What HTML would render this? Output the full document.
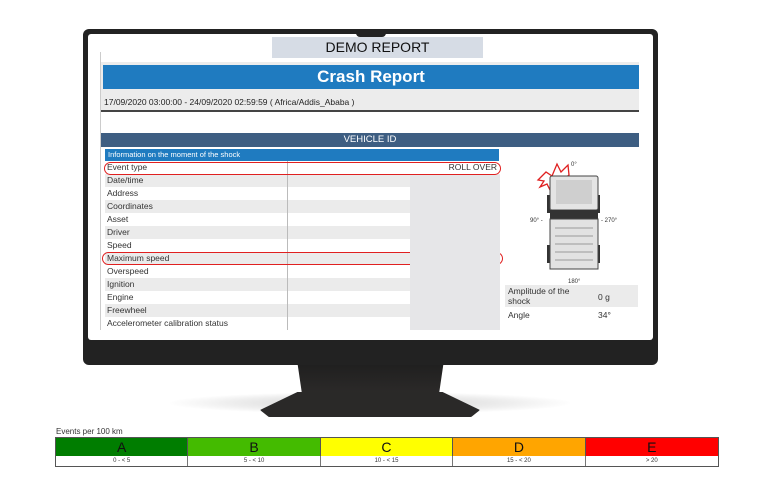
<!DOCTYPE html>
<html><head><meta charset="utf-8"><style>
*{margin:0;padding:0;box-sizing:border-box}
body{width:768px;height:485px;background:#fff;position:relative;overflow:hidden;font-family:"Liberation Sans",sans-serif}
.a{position:absolute}
.row{position:absolute;left:105px;width:395px;height:13px;font-size:8.5px;color:#333;line-height:13px;padding-left:2px}
.g{background:#ebebeb}
.seg{position:absolute;top:438px;height:18px;width:132.4px;border-right:1px solid #555;text-align:center;font-size:14px;line-height:18px;color:#111}
.rg{position:absolute;top:456px;height:10px;width:132.4px;border-right:1px solid #777;text-align:center;font-size:6px;line-height:10px;color:#333}
</style></head><body>
<!-- shadow -->
<div class="a" style="left:170px;top:392px;width:400px;height:22px;border-radius:50%;background:radial-gradient(ellipse,#cfcfcf 0%,#eee 50%,rgba(255,255,255,0) 72%)"></div>
<!-- stand -->
<div class="a" style="left:297px;top:360px;width:147px;height:40px;background:linear-gradient(#1e1e1e,#2e2c2b);clip-path:polygon(0 0,100% 0,96% 100%,4% 100%)"></div>
<div class="a" style="left:260px;top:392px;width:220px;height:25px;background:#2a2928;clip-path:polygon(17% 0,83% 0,100% 72%,96% 100%,4% 100%,0 72%);border-radius:0 0 10px 10px"></div>
<!-- monitor -->
<div class="a" style="left:83px;top:29px;width:575px;height:336px;background:#222;border-radius:6px"></div>
<div class="a" style="left:88px;top:34px;width:565px;height:306px;background:#fff;border-radius:3px"></div>
<div class="a" style="left:356px;top:30px;width:30px;height:7px;background:#222;border-radius:0 0 4px 4px"></div>
<div class="a" style="left:100px;top:52px;width:1px;height:278px;background:#ccc"></div>
<!-- report -->
<div class="a" style="left:272px;top:37px;width:211px;height:21px;background:#d6dce5;font-size:14px;text-align:center;line-height:21px;color:#111">DEMO REPORT</div>
<div class="a" style="left:101px;top:62px;width:538px;height:49px;background:#ececec"></div>
<div class="a" style="left:103px;top:65px;width:536px;height:24px;background:#1f7bc0;color:#fff;font-weight:bold;font-size:17px;text-align:center;line-height:24px">Crash Report</div>
<div class="a" style="left:104px;top:97px;font-size:8.5px;color:#222">17/09/2020 03:00:00 - 24/09/2020 02:59:59 ( Africa/Addis_Ababa )</div>
<div class="a" style="left:101px;top:110px;width:538px;height:2px;background:#444"></div>
<div class="a" style="left:101px;top:133px;width:538px;height:14px;background:#3e5e82;color:#fff;font-size:9.5px;text-align:center;line-height:14px">VEHICLE ID</div>
<div class="a" style="left:105px;top:149px;width:394px;height:12px;background:#1f7bc0;color:#fff;font-size:7.5px;line-height:12px;padding-left:3px">Information on the moment of the shock</div>
<div class="row" style="top:161px">Event type<span style="position:absolute;right:3px">ROLL OVER</span></div>
<div class="row g" style="top:174px">Date/time</div>
<div class="row" style="top:187px">Address</div>
<div class="row g" style="top:200px">Coordinates</div>
<div class="row" style="top:213px">Asset</div>
<div class="row g" style="top:226px">Driver</div>
<div class="row" style="top:239px">Speed</div>
<div class="row g" style="top:252px">Maximum speed</div>
<div class="row" style="top:265px">Overspeed</div>
<div class="row g" style="top:278px">Ignition</div>
<div class="row" style="top:291px">Engine</div>
<div class="row g" style="top:304px">Freewheel</div>
<div class="row" style="top:317px">Accelerometer calibration status</div>
<div class="a" style="left:287px;top:161px;width:1px;height:169px;background:#bbb"></div>
<div class="a" style="left:104px;top:162px;width:397px;height:13px;border:1.5px solid #e02020;border-radius:7px"></div>
<div class="a" style="left:102px;top:252px;width:401px;height:13px;border:1.5px solid #e02020;border-radius:7px"></div>
<div class="a" style="left:410px;top:175px;width:90px;height:155px;background:#e6e6e8"></div>
<!-- truck -->
<svg class="a" style="left:520px;top:155px" width="110" height="130" viewBox="520 155 110 130">
<polygon points="538,180 546,172 552,176 557,164 561,172 568,165 569,175 560,182 550,190 547,184 540,187 544,181" fill="#fff" stroke="#e02020" stroke-width="1.3"/>
<rect x="547" y="195" width="3" height="18" fill="#333"/><rect x="597" y="195" width="3" height="18" fill="#333"/>
<rect x="547" y="245" width="3" height="18" fill="#333"/><rect x="597" y="245" width="3" height="18" fill="#333"/>
<rect x="550" y="176" width="48" height="34" rx="2" fill="#e4e4e4" stroke="#444"/>
<rect x="556" y="180" width="36" height="24" fill="#cfcfcf"/>
<rect x="550" y="210" width="48" height="9" fill="#333"/>
<rect x="550" y="219" width="48" height="50" fill="#e2e2e2" stroke="#444"/>
<g stroke="#999" stroke-width="1"><line x1="555" y1="228" x2="593" y2="228"/><line x1="555" y1="236" x2="593" y2="236"/><line x1="555" y1="244" x2="593" y2="244"/><line x1="555" y1="252" x2="593" y2="252"/><line x1="555" y1="260" x2="593" y2="260"/></g>
<g font-size="6" fill="#333" font-family="Liberation Sans"><text x="571" y="166">0°</text><text x="530" y="222">90° -</text><text x="601" y="222">- 270°</text><text x="568" y="283">180°</text></g>
</svg>
<div class="a" style="left:505px;top:285px;width:133px;height:22px;background:#ebebeb"></div>
<div class="a" style="left:508px;top:286px;font-size:8.5px;color:#333;line-height:10px">Amplitude of the<br>shock</div>
<div class="a" style="left:598px;top:292px;font-size:8.5px;color:#333">0 g</div>
<div class="a" style="left:508px;top:310px;font-size:8.5px;color:#333">Angle</div>
<div class="a" style="left:598px;top:310px;font-size:8.5px;color:#333">34°</div>
<!-- chart -->
<div class="a" style="left:56px;top:427px;font-size:8px;color:#333">Events per 100 km</div>
<div class="a" style="left:55px;top:437px;width:664px;height:30px;border:1px solid #555"></div>
<div class="seg" style="left:56px;background:#007d00">A</div>
<div class="seg" style="left:188.4px;background:#44bb00">B</div>
<div class="seg" style="left:320.8px;background:#ffff00">C</div>
<div class="seg" style="left:453.2px;background:#ffa500">D</div>
<div class="seg" style="left:585.6px;background:#ff0000;border-right:none">E</div>
<div class="rg" style="left:56px">0 - &lt; 5</div>
<div class="rg" style="left:188.4px">5 - &lt; 10</div>
<div class="rg" style="left:320.8px">10 - &lt; 15</div>
<div class="rg" style="left:453.2px">15 - &lt; 20</div>
<div class="rg" style="left:585.6px;border-right:none">&gt; 20</div>
</body></html>
